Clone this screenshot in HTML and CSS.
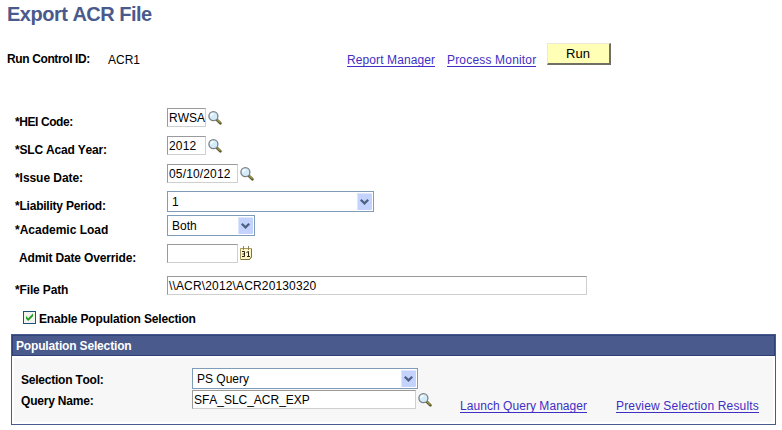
FILE: index.html
```html
<!DOCTYPE html>
<html lang="en">
<head>
<meta charset="utf-8">
<title>Export ACR File</title>
<link rel="stylesheet" href="styles.css">
</head>
<body>
<svg class="defs" width="0" height="0" aria-hidden="true">
  <symbol id="lens" viewBox="0 0 14 14">
    <path d="M8.8 8.8L12.4 12.3" stroke="#55552a" stroke-width="2.6" stroke-linecap="round"/>
    <path d="M9 8.6L12.4 11.9" stroke="#a5a34a" stroke-width="1.2"/>
    <circle cx="5.4" cy="5.2" r="4.5" fill="#d3ecfa" stroke="#7c8186" stroke-width="1.3"/>
    <path d="M3 5.2Q3.2 3 5.5 2.7" fill="none" stroke="#fff" stroke-width="1.5"/>
  </symbol>
  <symbol id="arrow" viewBox="0 0 15 17">
    <rect width="15" height="17" rx="1.5" fill="#c3d3fd"/>
    <path d="M.5 16V1.5Q.5.5 1.5.5H14" fill="none" stroke="#dce6ff"/>
    <path d="M3.8 6.7L7.5 10.3L11.2 6.7" fill="none" stroke="#4d6185" stroke-width="2.3"/>
  </symbol>
  <symbol id="calendar" viewBox="0 0 12 14">
    <path d="M.5 2.5H11.5V11L9.5 13.5H.5Z" fill="#fff8c6" stroke="#a89a5c"/>
    <path d="M11.5 3V11L9.5 13.5H1" fill="none" stroke="#80703a"/>
    <path d="M3.5 0V4M8.5 0V4" stroke="#8b8057"/>
    <path d="M2 5.5H4.5V10.5H2M2.5 8H4.5M6.5 6.5L8.5 5.5V10.5M7 10.5H10" fill="none" stroke="#29251a"/>
  </symbol>
</svg>
<main class="page">
  <h1 class="title">Export ACR File</h1>
  <div class="runbar">
    <span class="label run-label">Run Control ID:</span>
    <span class="run-id">ACR1</span>
    <a class="link link-report">Report Manager</a>
    <a class="link link-process">Process Monitor</a>
    <button class="run">Run</button>
  </div>
  <form class="form">
    <div class="row"><span class="label t-hei">*HEI Code:</span><span class="field w-code t-rwsa">RWSA</span><svg class="lens"><use href="#lens"/></svg></div>
    <div class="row"><span class="label t-year">*SLC Acad Year:</span><span class="field w-code">2012</span><svg class="lens"><use href="#lens"/></svg></div>
    <div class="row row-issue"><span class="label t-issue">*Issue Date:</span><span class="field w-date">05/10/2012</span><svg class="lens"><use href="#lens"/></svg></div>
    <div class="row row-liability"><span class="label t-liability">*Liability Period:</span><span class="select w-period">1<svg class="arrow"><use href="#arrow"/></svg></span></div>
    <div class="row row-load"><span class="label t-load">*Academic Load</span><span class="select w-load">Both<svg class="arrow"><use href="#arrow"/></svg></span></div>
    <div class="row row-admit"><span class="label t-admit">Admit Date Override:</span><span class="field w-date"></span><svg class="calendar"><use href="#calendar"/></svg></div>
    <div class="row row-path"><span class="label t-path">*File Path</span><span class="field w-path">\\ACR\2012\ACR20130320</span></div>
    <div class="enable">
      <svg class="check" viewBox="0 0 13 13"><rect x=".5" y=".5" width="12" height="12" fill="#f3f3ef" stroke="#1c5180"/><path d="M3 5V7.8L5.2 10L10 5.2V2.6L5.2 7.2Z" fill="#21a121"/></svg>
      <span class="label t-enable">Enable Population Selection</span>
    </div>
  </form>
  <section class="panel">
    <h2 class="panel-head">Population Selection</h2>
    <div class="panel-body">
      <div class="prow prow-tool"><span class="label t-tool">Selection Tool:</span><span class="select w-tool">PS Query<svg class="arrow"><use href="#arrow"/></svg></span></div>
      <div class="prow prow-query"><span class="label t-query">Query Name:</span><span class="field w-query">SFA_SLC_ACR_EXP</span><svg class="lens"><use href="#lens"/></svg><a class="link link-launch">Launch Query Manager</a><a class="link link-preview">Preview Selection Results</a></div>
    </div>
  </section>
</main>
</body>
</html>
```
FILE: styles.css
```css
* { box-sizing: border-box; }
body {
  margin: 0;
  background: #fff;
  color: #000;
  font: 12px/14px "Liberation Sans", Arial, sans-serif;
  font-kerning: none;
  white-space: nowrap;
  overflow: hidden;
}
svg { display: block; flex: none; }
.defs { position: absolute; }
.page { width: 782px; height: 430px; }
.title {
  margin: 0;
  padding: 3px 0 0 7px;
  height: 43px;
  color: #4a5a8c;
  font-size: 20px;
  line-height: 22px;
  letter-spacing: -.5px;
}
.label { font-weight: bold; flex: none; }

.runbar { display: flex; height: 65px; padding-left: 7px; }
.run-label { width: 101px; padding-top: 9px; letter-spacing: -.38px; }
.run-id { width: 239px; padding-top: 10px; }
.link {
  flex: none;
  height: 14px;
  color: #3f2fc4;
  line-height: 14px;
  border-bottom: 1px solid #3f2fc4;
}
.link-report { width: 88px; margin: 10px 12px 0 0; letter-spacing: .1px; }
.link-process { width: 89px; margin: 10px 11px 0 0; letter-spacing: .18px; }
.run {
  width: 64px;
  height: 22px;
  padding: 0 1px 0 0;
  background: #ffffb5;
  border: solid;
  border-width: 1px 2px 2px 1px;
  border-color: #ece9d8 #716f64 #716f64 #ece9d8;
  color: #000;
  font: 13px/18px "Liberation Sans", Arial, sans-serif;
}

.row { display: flex; height: 28px; padding-left: 15px; }
.row .label { width: 152px; padding-top: 7px; }
.row-issue { height: 27px; }
.row-liability { height: 24px; }
.row-liability .label, .row-load .label { padding-top: 8px; }
.row-load { height: 29px; }
.row-admit { height: 32px; padding-left: 19px; }
.row-admit .label { width: 148px; }
.row-path { height: 35px; }

.field {
  flex: none;
  height: 19px;
  padding-left: 1px;
  background: #fff;
  border: 1px solid;
  border-color: #9a9a9a #cfcfcf #cfcfcf #9a9a9a;
  line-height: 18px;
  letter-spacing: .15px;
}
.select {
  display: flex;
  flex: none;
  justify-content: space-between;
  height: 21px;
  padding: 1px 1px 1px 4px;
  background: #fff;
  border: 1px solid #7f9db9;
  line-height: 18px;
}
.w-code { width: 39px; }
.w-date { width: 71px; }
.w-path { width: 420px; }
.w-query { width: 224px; }
.w-period { width: 207px; }
.w-load { width: 88px; }
.w-tool { width: 226px; }
.lens { width: 14px; height: 14px; margin: 3px 0 0 2px; }
.arrow { width: 15px; height: 17px; }
.calendar { width: 12px; height: 14px; margin: 2px 0 0 2px; }

.enable { display: flex; height: 23px; padding-left: 23px; }
.check { width: 13px; height: 13px; margin-right: 3px; }
.enable .label { padding-top: 1px; }

.t-rwsa { letter-spacing: 0; }
.t-hei { letter-spacing: -.42px; }
.t-year { letter-spacing: -.2px; }
.t-issue { letter-spacing: -.06px; }
.t-liability { letter-spacing: -.22px; }
.t-admit { letter-spacing: -.15px; }
.t-path { letter-spacing: -.15px; }
.t-enable { letter-spacing: -.17px; }
.t-tool { letter-spacing: -.23px; }
.t-query { letter-spacing: -.2px; }

.panel {
  width: 765px;
  height: 91px;
  margin-left: 11px;
  border: 1px solid #4a5a8c;
  padding: 0 2px 2px;
}
.panel-head {
  height: 21px;
  margin: 0 -2px 2px;
  padding-left: 3px;
  background: #4a5a8c;
  border: 1px solid #2e4177;
  border-top-color: #31447a;
  color: #fff;
  font-size: 12px;
  line-height: 20px;
  letter-spacing: -.16px;
}
.panel-body { height: 64px; padding: 10px 0 0 7px; background: #f7f7f7; }
.prow { display: flex; }
.prow .label { width: 171px; padding-top: 5px; }
.prow-tool { height: 22px; }
.prow-query .label { padding-top: 4px; }
.w-query { letter-spacing: -.02px; }
.link-launch { width: 127px; margin: 9px 29px 0 28px; letter-spacing: .05px; }
.link-preview { width: 143px; margin-top: 9px; letter-spacing: .17px; }
```
